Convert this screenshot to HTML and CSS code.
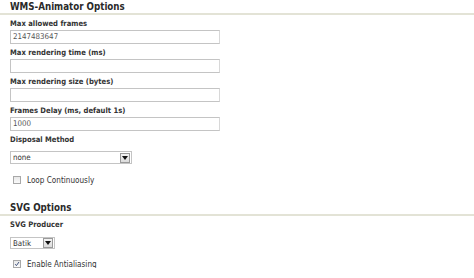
FILE: index.html
```html
<!DOCTYPE html>
<html>
<head>
<meta charset="utf-8">
<link rel="stylesheet" href="styles.css">
</head>
<body>
<div class="section">
  <h2 class="section-title">WMS-Animator Options</h2>
  <div class="section-body">
    <label class="field-label">Max allowed frames</label>
    <div class="text-input">2147483647</div>
    <label class="field-label">Max rendering time (ms)</label>
    <div class="text-input"></div>
    <label class="field-label">Max rendering size (bytes)</label>
    <div class="text-input"></div>
    <label class="field-label">Frames Delay (ms, default 1s)</label>
    <div class="text-input">1000</div>
    <label class="field-label">Disposal Method</label>
    <div class="select select-wide">
      <span class="select-value">none</span>
      <span class="select-button"><svg width="6" height="4" viewBox="0 0 6 4"><path d="M0 0h6L3 4z" fill="#111"/></svg></span>
    </div>
    <div class="check-row check-loop">
      <span class="checkbox"></span>
      <span class="check-label">Loop Continuously</span>
    </div>
  </div>
</div>
<div class="section section-svg">
  <h2 class="section-title">SVG Options</h2>
  <div class="section-body">
    <label class="field-label">SVG Producer</label>
    <div class="select select-narrow">
      <span class="select-value">Batik</span>
      <span class="select-button"><svg width="6" height="4" viewBox="0 0 6 4"><path d="M0 0h6L3 4z" fill="#111"/></svg></span>
    </div>
    <div class="check-row check-aa">
      <span class="checkbox checked"><svg width="8" height="8" viewBox="0 0 8 8"><path d="M1.5 4.2L3.2 6.2L6.6 1.4" fill="none" stroke="#3c4f7a" stroke-width="1.3"/></svg></span>
      <span class="check-label">Enable Antialiasing</span>
    </div>
  </div>
</div>
</body>
</html>
```

FILE: styles.css
```css
html, body {
  margin: 0;
  padding: 0;
  background: #fff;
}
body {
  font-family: "DejaVu Sans", Verdana, sans-serif;
  font-stretch: condensed;
  color: #333;
}
.section-title {
  margin: 0;
  padding: 0 0 0 10px;
  height: 13px;
  font-size: 9.7px;
  line-height: 13px;
  font-weight: bold;
  color: #2a2a2a;
  border-bottom: 2px solid #e3e3d6;
}
.section-body {
  padding: 0 10px;
}
.field-label {
  display: block;
  height: 15px;
  line-height: 17px;
  font-size: 7.6px;
  font-weight: bold;
  color: #333;
}
.text-input {
  box-sizing: border-box;
  width: 210px;
  height: 14px;
  border: 1px solid #c4c4c4;
  border-right-color: #d8d8d8;
  padding: 0 2px;
  font-size: 7.9px;
  line-height: 12px;
  color: #555;
}
.select {
  box-sizing: border-box;
  display: flex;
  align-items: center;
  justify-content: space-between;
  border: 1px solid #c4c4c4;
  margin-top: 5px;
  padding-left: 2px;
  font-size: 7.9px;
  color: #333;
}
.select-wide {
  width: 122px;
  height: 13px;
}
.select-narrow {
  width: 45px;
  height: 12px;
  margin-top: 6px;
}
.select-button {
  box-sizing: border-box;
  width: 10px;
  height: 10px;
  margin-right: 1px;
  border: 1px solid #9a9a9a;
  background: linear-gradient(#f4f4f4, #dcdcdc);
  display: flex;
  align-items: center;
  justify-content: center;
}
.check-row {
  display: flex;
  align-items: center;
  height: 9px;
  padding-left: 3px;
}
.check-loop {
  margin-top: 11px;
}
.check-aa {
  margin-top: 10px;
}
.checkbox {
  box-sizing: border-box;
  width: 8px;
  height: 8px;
  border: 1px solid #a8a8a8;
  background: linear-gradient(#e8e8e8, #fafafa);
  display: flex;
  align-items: center;
  justify-content: center;
}
.checkbox svg {
  display: block;
}
.check-label {
  margin-left: 6px;
  font-size: 8.1px;
  color: #333;
}
.section-svg {
  margin-top: 17px;
}
```
